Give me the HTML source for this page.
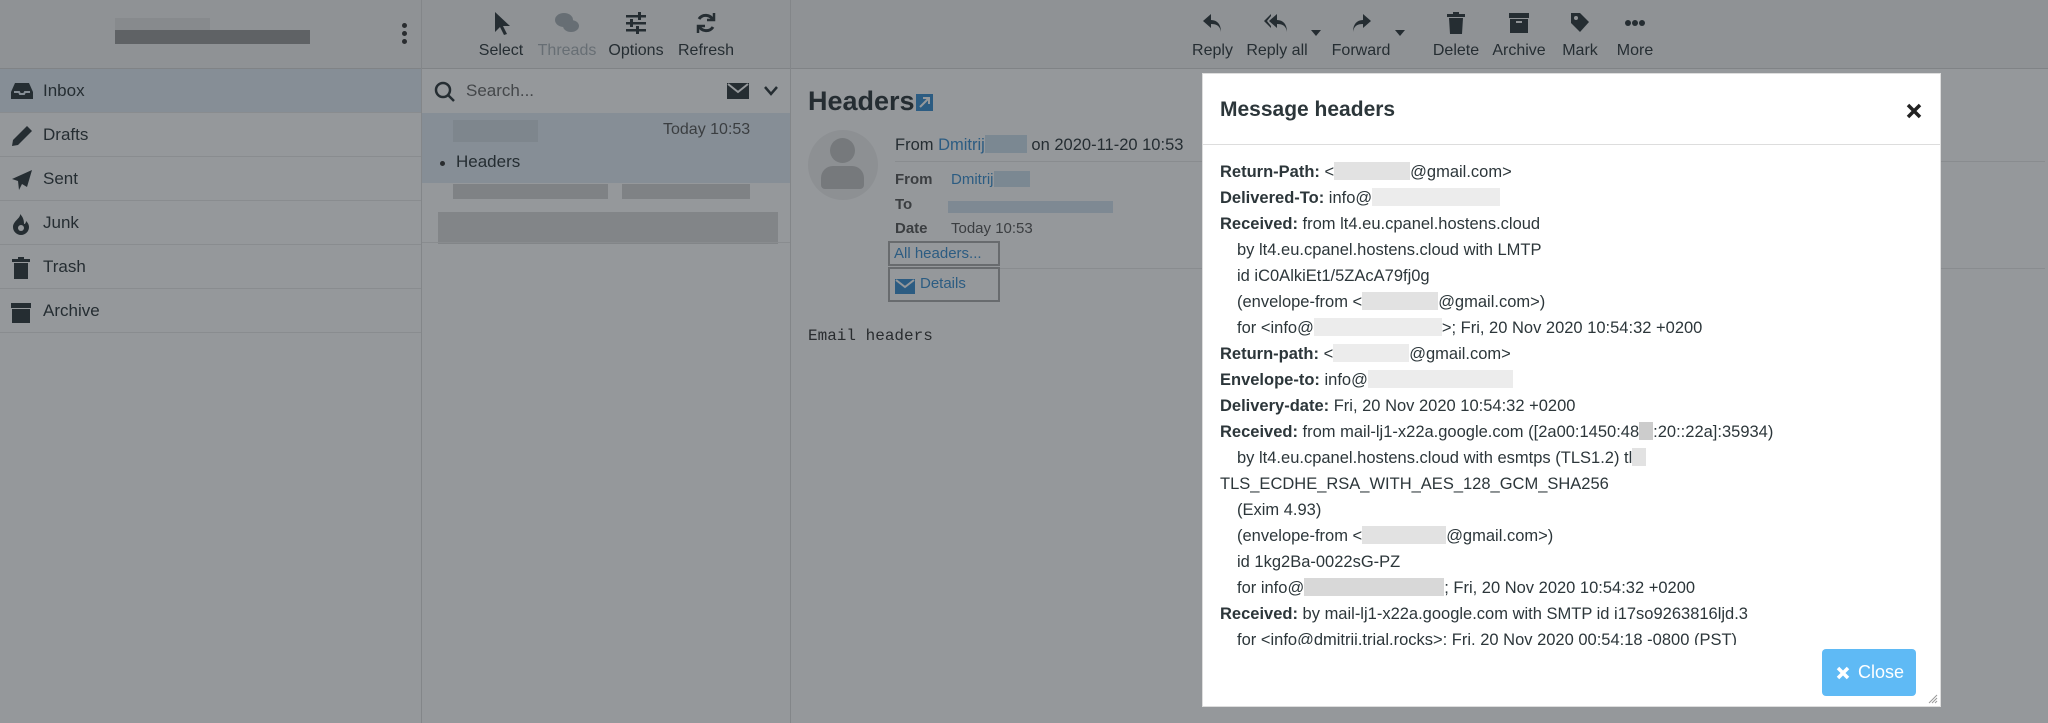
<!DOCTYPE html>
<html><head><meta charset="utf-8"><style>
*{margin:0;padding:0;box-sizing:border-box}
body{width:2048px;height:723px;overflow:hidden;background:#fff;font-family:"Liberation Sans",sans-serif;color:#2c363a;position:relative}
.a{position:absolute;white-space:nowrap}
.bar{background:#f4f4f4}
.blur{position:absolute;background:#cfd3d6}
.tb{position:absolute;top:0;text-align:center;font-size:16px;color:#2c363a}
.tb svg{display:block;margin:11px auto 7px}
.nav{position:absolute;left:0;width:421px;height:44px;border-bottom:1px solid #e8e8e8;font-size:17px;line-height:44px;padding-left:43px}
.nav svg{position:absolute;left:11px;top:12px}
.ov{position:absolute;left:0;top:0;width:2048px;height:723px;background:rgba(30,36,42,0.47)}
.modal{position:absolute;left:1202px;top:73px;width:739px;height:634px;background:#fff;border:1px solid #ddd}
.mb{position:absolute;left:17px;top:85px;width:700px;height:486px;overflow:hidden;font-size:16.5px;line-height:26px;color:#2c363a}
.mb b{font-weight:bold}
.mb .i{padding-left:17px}
.g{display:inline-block;background:#e2e2e2;height:18px;vertical-align:-3px}
</style></head><body>
<div class="a bar" style="left:0;top:0;width:2048px;height:69px;border-bottom:1px solid #d8d8d8"></div>
<div class="a" style="left:421px;top:0;width:1px;height:723px;background:#ddd"></div>
<div class="a" style="left:790px;top:0;width:1px;height:723px;background:#ddd"></div>
<div class="blur" style="left:115px;top:18px;width:95px;height:12px;background:#e4e4e4"></div>
<div class="blur" style="left:115px;top:30px;width:195px;height:14px;background:#9a9a9a"></div>
<div class="a" style="left:402px;top:23px;width:5px;height:5px;border-radius:50%;background:#333;box-shadow:0 8px 0 #333,0 16px 0 #333"></div>
<div class="tb" style="left:475px;width:52px"><svg width="20" height="24" viewBox="0 0 20 24"><path d="M4 1v20l5-5 4 8 3-1-4-8h7z" fill="#2c363a"/></svg>Select</div>
<div class="tb" style="left:536px;width:62px;color:#a8b0b5"><svg width="26" height="24" viewBox="0 0 26 24"><ellipse cx="10" cy="9" rx="9" ry="7" fill="#a8b0b5"/><ellipse cx="17" cy="15" rx="8" ry="6" fill="#a8b0b5"/></svg>Threads</div>
<div class="tb" style="left:606px;width:60px"><svg width="24" height="24" viewBox="0 0 24 24" fill="#2c363a"><rect x="2" y="4" width="20" height="2.5"/><rect x="2" y="11" width="20" height="2.5"/><rect x="2" y="18" width="20" height="2.5"/><rect x="14" y="1" width="3" height="8"/><rect x="6" y="8" width="3" height="8"/><rect x="12" y="15" width="3" height="8"/></svg>Options</div>
<div class="tb" style="left:675px;width:62px"><svg width="24" height="24" viewBox="0 0 24 24" fill="none" stroke="#2c363a" stroke-width="3"><path d="M19 9A8 8 0 0 0 5 8M5 15a8 8 0 0 0 14 1"/><path d="M20 2v7h-7M4 22v-7h7" stroke-width="2.5"/></svg>Refresh</div>
<div class="tb" style="left:1190px;width:45px"><svg width="24" height="24" viewBox="0 0 24 24"><path d="M10 3L2 10l8 7v-4c6 0 9 2 10 8 0-8-4-12-10-12z" fill="#2c363a"/></svg>Reply</div>
<div class="tb" style="left:1246px;width:62px"><svg width="28" height="24" viewBox="0 0 28 24" fill="#2c363a"><path d="M8 3L1 10l7 7v-2L4 10l4-5z"/><path d="M14 3L6 10l8 7v-4c6 0 9 2 10 8 0-8-4-12-10-12z"/></svg>Reply all</div>
<div class="a" style="left:1311px;top:30px;border:5px solid transparent;border-top:6px solid #2c363a"></div>
<div class="tb" style="left:1330px;width:62px"><svg width="24" height="24" viewBox="0 0 24 24"><path d="M14 3l8 7-8 7v-4c-6 0-9 2-10 8 0-8 4-12 10-12z" fill="#2c363a"/></svg>Forward</div>
<div class="a" style="left:1395px;top:30px;border:5px solid transparent;border-top:6px solid #2c363a"></div>
<div class="tb" style="left:1432px;width:48px"><svg width="20" height="24" viewBox="0 0 20 24" fill="#2c363a"><rect x="1" y="3" width="18" height="3"/><rect x="7" y="1" width="6" height="3"/><path d="M3 7h14l-1 16H4z"/></svg>Delete</div>
<div class="tb" style="left:1490px;width:58px"><svg width="22" height="24" viewBox="0 0 22 24" fill="#2c363a"><rect x="1" y="2" width="20" height="5"/><path d="M2 8h18v14H2z"/><rect x="8" y="10" width="6" height="2" fill="#f4f4f4"/></svg>Archive</div>
<div class="tb" style="left:1560px;width:40px"><svg width="22" height="24" viewBox="0 0 22 24"><path d="M2 2h9l9 9-9 10-9-9z" fill="#2c363a"/><circle cx="7" cy="7" r="2" fill="#f4f4f4"/></svg>Mark</div>
<div class="tb" style="left:1612px;width:46px"><svg width="24" height="24" viewBox="0 0 24 24" fill="#2c363a"><circle cx="5" cy="12" r="3"/><circle cx="12" cy="12" r="3"/><circle cx="19" cy="12" r="3"/></svg>More</div>
<div class="nav" style="top:69px;background:#e2edf6">
<svg width="22" height="20" viewBox="0 0 22 20"><path d="M4 2h14l4 9v7H0v-7z" fill="#2c363a"/><path d="M3 11h5l1 2h4l1-2h5" stroke="#e2edf6" stroke-width="2" fill="none"/></svg>Inbox</div>
<div class="nav" style="top:113px"><svg width="22" height="22" viewBox="0 0 22 22"><path d="M16 1l5 5L7 20l-6 1 1-6z" fill="#2c363a"/></svg>Drafts</div>
<div class="nav" style="top:157px"><svg width="22" height="22" viewBox="0 0 22 22"><path d="M21 1L1 10l6 2 1 9 3-6 5 3z" fill="#2c363a"/></svg>Sent</div>
<div class="nav" style="top:201px"><svg width="20" height="22" viewBox="0 0 20 22"><path d="M9 1c1 4-7 7-7 13a8 8 0 0 0 16 0c0-3-2-5-3-6 0 2-1 3-2 3 0-4-1-7-4-10z" fill="#2c363a"/><circle cx="10" cy="15" r="3" fill="#fff"/></svg>Junk</div>
<div class="nav" style="top:245px"><svg width="20" height="22" viewBox="0 0 20 22" fill="#2c363a"><rect x="1" y="2" width="18" height="3"/><rect x="7" y="0" width="6" height="3"/><path d="M3 6h14v16H3z"/></svg>Trash</div>
<div class="nav" style="top:289px"><svg width="20" height="22" viewBox="0 0 20 22" fill="#2c363a"><rect x="0" y="2" width="20" height="5"/><path d="M1 8h18v14H1z"/></svg>Archive</div>
<div class="a" style="left:422px;top:69px;width:368px;height:44px;font-size:17px;line-height:44px;color:#666">
<svg style="position:absolute;left:12px;top:12px" width="22" height="22" viewBox="0 0 22 22" fill="none" stroke="#2c363a" stroke-width="2.5"><circle cx="9" cy="9" r="7"/><path d="M14 14l6 6"/></svg>
<span style="position:absolute;left:44px">Search...</span>
<svg style="position:absolute;left:305px;top:14px" width="22" height="16" viewBox="0 0 22 16"><rect width="22" height="16" fill="#2c363a"/><path d="M1 1l10 8 10-8" stroke="#fff" stroke-width="2" fill="none"/></svg>
<svg style="position:absolute;left:342px;top:17px" width="14" height="10" viewBox="0 0 14 10"><path d="M1 1l6 7 6-7" stroke="#2c363a" stroke-width="2.5" fill="none"/></svg></div>
<div class="a" style="left:422px;top:113px;width:368px;height:70px;background:#e2edf6"></div>
<div class="blur" style="left:453px;top:120px;width:85px;height:22px;background:#d4dde4"></div>
<div class="a" style="left:663px;top:121px;font-size:16px;color:#555">Today 10:53</div>
<div class="a" style="left:440px;top:161px;width:5px;height:5px;border-radius:50%;background:#333"></div>
<div class="a" style="left:456px;top:152px;font-size:17px">Headers</div>
<div class="blur" style="left:453px;top:184px;width:155px;height:15px;background:#d5d5d5"></div>
<div class="blur" style="left:622px;top:184px;width:128px;height:15px;background:#d5d5d5"></div>
<div class="blur" style="left:438px;top:212px;width:340px;height:32px;background:#dcdcdc"></div>
<div class="a" style="left:422px;top:242px;width:368px;height:1px;background:#e8e8e8"></div>
<div class="a" style="left:808px;top:86px;font-size:27px;font-weight:bold;color:#2c363a">Headers</div>
<div class="a" style="left:916px;top:94px;width:17px;height:17px;background:#3a8fd0"><svg width="17" height="17" viewBox="0 0 17 17"><path d="M4 13l8-8M7 4h6v6" stroke="#fff" stroke-width="2" fill="none"/></svg></div>
<div class="a" style="left:808px;top:130px;width:70px;height:70px;border-radius:50%;background:#f0f0f0"></div>
<div class="a" style="left:830px;top:138px;width:25px;height:25px;border-radius:50%;background:#c4c4c4"></div>
<div class="a" style="left:821px;top:166px;width:43px;height:23px;border-radius:12px 12px 4px 4px;background:#c4c4c4"></div>
<div class="a" style="left:895px;top:135px;font-size:16.5px">From <span style="color:#3a8fd0">Dmitrij</span><span class="g" style="width:42px;background:#cfe0ee"></span> on 2020-11-20 10:53</div>
<div class="a" style="left:895px;top:161px;width:1150px;height:1px;background:#e8e8e8"></div>
<div class="a" style="left:895px;top:171px;font-size:15px;font-weight:bold;color:#555">From</div>
<div class="a" style="left:951px;top:171px;font-size:15px;color:#3a8fd0">Dmitrij<span class="g" style="width:36px;background:#cfe0ee;height:16px"></span></div>
<div class="a" style="left:895px;top:196px;font-size:15px;font-weight:bold;color:#555">To</div>
<div class="blur" style="left:948px;top:201px;width:165px;height:12px;background:#d3e3f0"></div>
<div class="a" style="left:895px;top:220px;font-size:15px;font-weight:bold;color:#555">Date</div>
<div class="a" style="left:951px;top:220px;font-size:15px;color:#555">Today 10:53</div>
<div class="a" style="left:888px;top:241px;width:112px;height:25px;border:2px solid #aaa;font-size:15px;color:#3a8fd0;padding:2px 4px">All headers...</div>
<div class="a" style="left:888px;top:267px;width:112px;height:35px;border:2px solid #aaa;font-size:15px;color:#3a8fd0;padding:6px 4px 0 30px"><svg style="position:absolute;left:5px;top:10px" width="20" height="15" viewBox="0 0 20 15"><rect width="20" height="15" fill="#3a8fd0"/><path d="M1 1l9 7 9-7" stroke="#fff" stroke-width="2" fill="none"/></svg>Details</div>
<div class="a" style="left:1000px;top:268px;width:1045px;height:1px;background:#e8e8e8"></div>
<div class="a" style="left:808px;top:327px;font-family:'Liberation Mono',monospace;font-size:16px;color:#333">Email headers</div>
<div class="ov"></div>
<div class="modal">
<div class="a" style="left:17px;top:24px;font-size:21px;font-weight:bold;color:#2c363a">Message headers</div>
<svg class="a" style="left:703px;top:29px" width="16" height="16" viewBox="0 0 16 16"><path d="M2 2l12 12M14 2L2 14" stroke="#222" stroke-width="3.5"/></svg>
<div class="a" style="left:0;top:70px;width:737px;height:1px;background:#ddd"></div>
<div class="mb">
<div><b>Return-Path:</b> &lt;<span class="g" style="width:76px"></span>@gmail.com&gt;</div>
<div><b>Delivered-To:</b> info@<span class="g" style="width:128px;background:#ececec"></span></div>
<div><b>Received:</b> from lt4.eu.cpanel.hostens.cloud</div>
<div class="i">by lt4.eu.cpanel.hostens.cloud with LMTP</div>
<div class="i">id iC0AlkiEt1/5ZAcA79fj0g</div>
<div class="i">(envelope-from &lt;<span class="g" style="width:76px"></span>@gmail.com&gt;)</div>
<div class="i">for &lt;info@<span class="g" style="width:128px;background:#ececec"></span>&gt;; Fri, 20 Nov 2020 10:54:32 +0200</div>
<div><b>Return-path:</b> &lt;<span class="g" style="width:76px;background:#ececec"></span>@gmail.com&gt;</div>
<div><b>Envelope-to:</b> info@<span class="g" style="width:145px;background:#ececec"></span></div>
<div><b>Delivery-date:</b> Fri, 20 Nov 2020 10:54:32 +0200</div>
<div><b>Received:</b> from mail-lj1-x22a.google.com ([2a00:1450:48<span class="g" style="width:14px;background:#ccc"></span>:20::22a]:35934)</div>
<div class="i">by lt4.eu.cpanel.hostens.cloud with esmtps (TLS1.2) tl<span class="g" style="width:14px"></span></div>
<div>TLS_ECDHE_RSA_WITH_AES_128_GCM_SHA256</div>
<div class="i">(Exim 4.93)</div>
<div class="i">(envelope-from &lt;<span class="g" style="width:84px"></span>@gmail.com&gt;)</div>
<div class="i">id 1kg2Ba-0022sG-PZ</div>
<div class="i">for info@<span class="g" style="width:140px;background:#d8d8d8"></span>; Fri, 20 Nov 2020 10:54:32 +0200</div>
<div><b>Received:</b> by mail-lj1-x22a.google.com with SMTP id i17so9263816ljd.3</div>
<div class="i">for &lt;info@dmitrij.trial.rocks&gt;; Fri, 20 Nov 2020 00:54:18 -0800 (PST)</div>
</div>
<div class="a" style="left:619px;top:575px;width:94px;height:47px;background:#5fbaf5;border-radius:4px;color:#fff;font-size:18px;line-height:47px;padding-left:36px"><svg style="position:absolute;left:14px;top:17px" width="14" height="14" viewBox="0 0 14 14"><path d="M2 2l10 10M12 2L2 12" stroke="#fff" stroke-width="3.5"/></svg>Close</div>
<svg class="a" style="left:725px;top:620px" width="10" height="10" viewBox="0 0 10 10"><path d="M9 1L1 9M9 4L4 9M9 7L7 9" stroke="#999" stroke-width="1"/></svg>
</div>
</body></html>
